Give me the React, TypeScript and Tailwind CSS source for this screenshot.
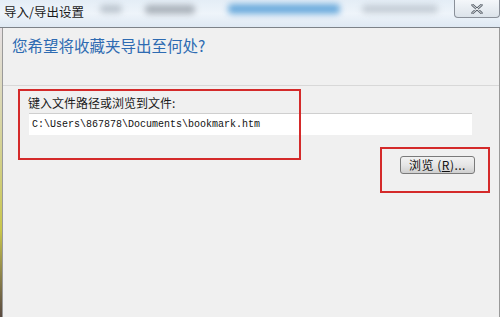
import React from "react";

const cjk = { fontFamily: '"Noto Sans CJK SC", "Noto Sans", sans-serif' };

export default function App() {
  return (
    <div className="relative w-[500px] h-[317px] overflow-hidden flex flex-col bg-[#f0f0f0]" style={cjk}>
      {/* Title bar */}
      <div className="relative h-[28px] shrink-0 bg-gradient-to-b from-[#e4edf6] via-[#eef4fa] to-[#dfe9f3] border-b border-[#7d8288] flex items-start">
        <div className="absolute inset-0 overflow-hidden pointer-events-none">
          <div className="absolute left-[100px] top-[5px] w-[22px] h-[8px] rounded bg-[#9aa5b0] blur-[3px] opacity-60" />
          <div className="absolute left-[145px] top-[5px] w-[50px] h-[9px] rounded bg-[#8d959e] blur-[3px] opacity-70" />
          <div className="absolute left-[228px] top-[4px] w-[112px] h-[10px] rounded bg-[#4d9ad6] blur-[3px] opacity-80" />
          <div className="absolute left-[362px] top-[5px] w-[76px] h-[8px] rounded bg-[#a8b2bc] blur-[3px] opacity-60" />
        </div>
        <div className="relative pl-[4px] pt-[3px] text-[12.5px] leading-[18px] text-[#1a1a1a]">导入/导出设置</div>
        <div className="ml-auto relative w-[46px] h-[18px] rounded-b-[4px] border border-t-0 border-[#8a9099] bg-gradient-to-b from-[#f4f7fa] to-[#dce3ea] flex items-center justify-center">
          <svg width="12" height="10" viewBox="0 0 12 10">
            <path d="M1.5 1 L10.5 9 M10.5 1 L1.5 9" stroke="#5a626b" strokeWidth="2.4" strokeLinecap="round" />
            <path d="M1.5 1 L10.5 9 M10.5 1 L1.5 9" stroke="#f6f8fa" strokeWidth="0.9" strokeLinecap="round" />
          </svg>
        </div>
      </div>

      {/* Body */}
      <div className="flex-1 flex">
        <div className="w-[2px] bg-gradient-to-b from-[#e6e0e4] via-[#c9c64a] via-70% to-[#5a4a40]" />
        <div className="flex-1 flex flex-col border-l border-r border-[#9a9a9a] bg-[#f0f0f0]">
          <div className="h-[58px] shrink-0 border-b border-[#d8d8d8] pl-[9px] pt-[6px]">
            <div className="text-[15.5px] leading-[22px] text-[#2e6bb2]">您希望将收藏夹导出至何处?</div>
          </div>
          <div className="flex flex-col pl-[25px] pr-[27px] pt-[9px]">
            <div className="text-[12px] leading-[16px] text-[#1a1a1a]">键入文件路径或浏览到文件:</div>
            <div className="mt-[2px] ml-[1px] h-[22px] bg-white border-t border-[#cfcfcf] flex items-center pl-[3px]">
              <span className="text-[10px] text-[#111]" style={{ fontFamily: '"Liberation Mono", monospace' }}>
                C:\Users\867878\Documents\bookmark.htm
              </span>
            </div>
            <div className="flex justify-end mt-[21px] -mr-[3px]">
              <button className="w-[75px] h-[18px] rounded-[3px] border border-[#7a7a7a] bg-gradient-to-b from-[#f2f2f2] via-[#e6e6e6] to-[#cfcfcf] text-[12px] leading-[16px] text-[#111] flex items-center justify-center tracking-[0.5px]">
                浏览 (<span className="underline">R</span>)...
              </button>
            </div>
          </div>
        </div>
      </div>

      {/* Red annotation boxes */}
      <div className="absolute left-[18px] top-[89px] w-[283px] h-[71px] border-2 border-[#d42a2a]" />
      <div className="absolute left-[380px] top-[147px] w-[110px] h-[46px] border-2 border-[#d42a2a]" />
    </div>
  );
}
